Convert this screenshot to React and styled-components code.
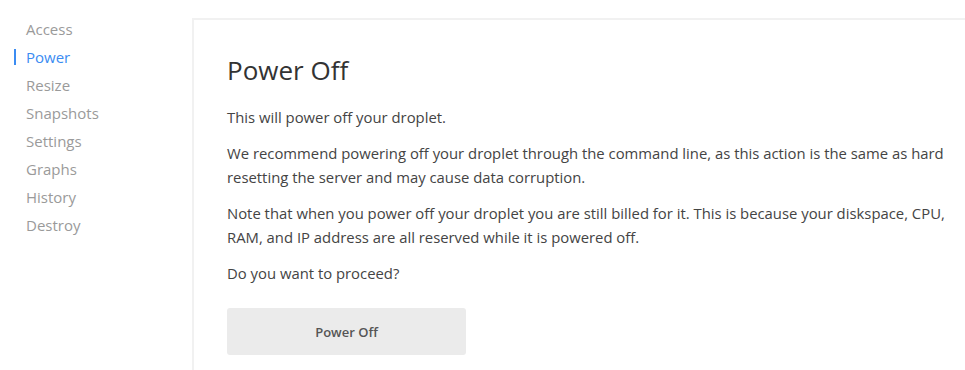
import React from "react";
import styled, { createGlobalStyle } from "styled-components";

const GlobalStyle = createGlobalStyle`
  body {
    margin: 0;
    background: #fff;
    font-family: "Open Sans", "Liberation Sans", sans-serif;
  }
`;

const NAV_ITEMS = [
  "Access",
  "Power",
  "Resize",
  "Snapshots",
  "Settings",
  "Graphs",
  "History",
  "Destroy",
];

const Page = styled.div`
  display: flex;
  align-items: flex-start;
  width: 965px;
  height: 370px;
  overflow: hidden;
`;

const Sidebar = styled.ul`
  list-style: none;
  margin: 0;
  padding: 15px 0 0 0;
  width: 192px;
  flex-shrink: 0;
`;

const NavItem = styled.li`
  position: relative;
  height: 28px;
  line-height: 28px;
  padding-left: 26px;
  font-size: 15px;
  color: ${(p) => (p.$active ? "#3b8cf2" : "#9a9a9a")};
  cursor: pointer;

  &::before {
    content: "";
    display: ${(p) => (p.$active ? "block" : "none")};
    position: absolute;
    left: 14px;
    top: 6px;
    width: 2px;
    height: 16px;
    background: #3b8cf2;
  }
`;

const Panel = styled.section`
  flex: 1;
  margin-top: 18px;
  min-height: 400px;
  border-top: 2px solid #f1f1f1;
  border-left: 2px solid #f1f1f1;
  padding: 34px 0 0 33px;
  color: #444;
`;

const Title = styled.h2`
  margin: 0 0 19px;
  font-size: 26px;
  font-weight: 400;
  line-height: 32px;
  color: #333;
`;

const Text = styled.p`
  margin: 0 0 12px;
  font-size: 14.85px;
  line-height: 24px;
  max-width: 730px;
`;

const Button = styled.button`
  margin-top: 11px;
  width: 239px;
  height: 47px;
  border: none;
  border-radius: 3px;
  background: #ebebeb;
  color: #555;
  font-family: inherit;
  font-size: 13px;
  font-weight: 600;
  cursor: pointer;
`;

export default function App() {
  return (
    <>
      <GlobalStyle />
      <Page>
        <Sidebar>
          {NAV_ITEMS.map((item) => (
            <NavItem key={item} $active={item === "Power"}>
              {item}
            </NavItem>
          ))}
        </Sidebar>
        <Panel>
          <Title>Power Off</Title>
          <Text>This will power off your droplet.</Text>
          <Text>
            We recommend powering off your droplet through the command line, as
            this action is the same as hard resetting the server and may cause
            data corruption.
          </Text>
          <Text>
            Note that when you power off your droplet you are still billed for
            it. This is because your diskspace, CPU, RAM, and IP address are all
            reserved while it is powered off.
          </Text>
          <Text>Do you want to proceed?</Text>
          <Button>Power Off</Button>
        </Panel>
      </Page>
    </>
  );
}
